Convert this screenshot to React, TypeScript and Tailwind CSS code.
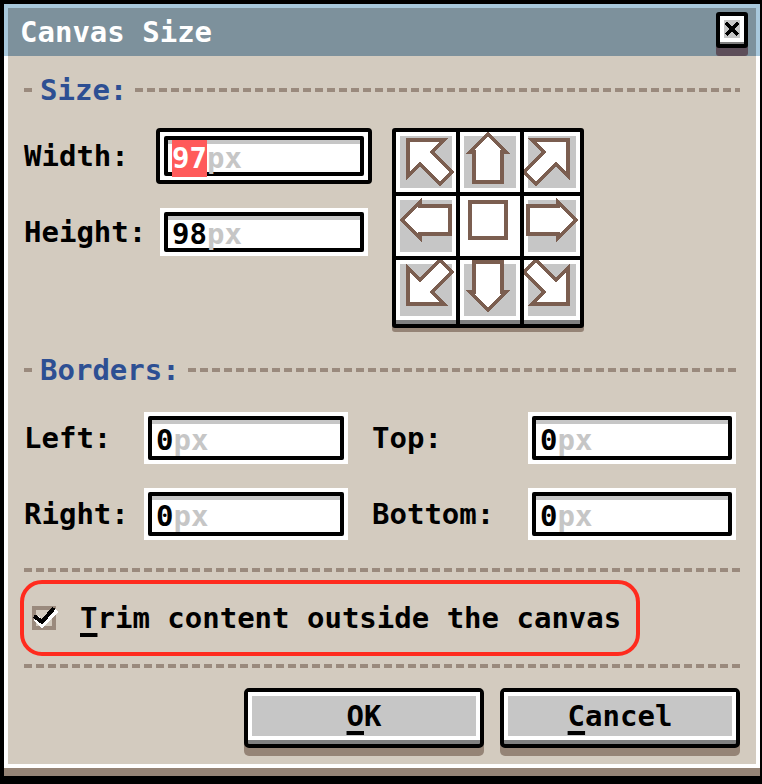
import React from 'react';

const FONT = "font-['DejaVu_Sans_Mono','Liberation_Mono',monospace]";
const DASHES = 'bg-[repeating-linear-gradient(90deg,#9a8a7d_0_8px,transparent_8px_12px)]';

type Pt = [number, number];

const NW: Pt[] = [[12, 8], [48, 8], [36, 20], [56, 40], [44, 52], [24, 32], [12, 44]];
const flipX = (p: Pt[], w: number): Pt[] => p.map(([x, y]) => [w - x, y]);
const flipY = (p: Pt[], h: number): Pt[] => p.map(([x, y]) => [x, h - y]);

// anchor glyphs, in the cell's own pixel space
const ANCHORS: { poly?: Pt[]; rect?: boolean }[] = [
    { poly: NW },
    { poly: [[28, 2], [46, 20], [42, 20], [42, 50], [14, 50], [14, 20], [10, 20]] },
    { poly: flipX(NW, 56) },
    { poly: [[6, 24], [24, 6], [24, 10], [54, 10], [54, 38], [24, 38], [24, 42]] },
    { rect: true },
    { poly: [[4, 10], [34, 10], [34, 6], [52, 24], [34, 42], [34, 38], [4, 38]] },
    { poly: flipY(NW, 52) },
    { poly: [[14, 2], [42, 2], [42, 32], [46, 32], [28, 50], [10, 32], [14, 32]] },
    { poly: flipY(flipX(NW, 56), 52) },
];

const AnchorGrid: React.FC = () => (
    <div className="shrink-0 grid grid-cols-[60px_60px_56px] grid-rows-[60px_60px_64px] gap-[4px] bg-black p-[4px] rounded-[3px] shadow-[0_4px_0_#958476]">
        {ANCHORS.map((a, i) => {
            const center = i === 4;
            const bottom = i >= 6;
            return (
                <div key={i} className="flex flex-col">
                    <div className={`relative flex-1 shadow-[inset_0_0_0_4px_#ffffff] ${center ? 'bg-white' : 'bg-[#c6c6c6]'}`}>
                        <svg className="absolute left-0 top-0" width="60" height="60" viewBox="0 0 60 60" shapeRendering="crispEdges">
                            {a.poly && (
                                <polygon
                                    points={a.poly.map(p => p.join(',')).join(' ')}
                                    fill="#ffffff"
                                    stroke="#7b5e50"
                                    strokeWidth="4"
                                    strokeLinejoin="miter"
                                />
                            )}
                            {a.rect && <rect x="10" y="6" width="36" height="36" fill="#ffffff" stroke="#7b5e50" strokeWidth="4" />}
                        </svg>
                    </div>
                    {bottom && <div className="h-[4px] bg-[#808080]" />}
                </div>
            );
        })}
    </div>
);

const SectionHeader: React.FC<{ label: string }> = ({ label }) => (
    <div className="flex items-center gap-[8px] h-[28px]">
        <div className="w-[8px] h-[4px] bg-[#9a8a7d]" />
        <span className="text-[#2d4f93] leading-none">{label}</span>
        <div className={`flex-1 h-[4px] ${DASHES}`} />
    </div>
);

interface FieldProps {
    value: string;
    width: number;
    height: number;
    focused?: boolean;
}

const Field: React.FC<FieldProps> = ({ value, width, height, focused }) => {
    const core = (
        <div className="flex-1 flex border-4 border-black bg-white rounded-[2px]">
            <div className="flex-1 flex items-center border-t-4 border-[#c6c6c6] pl-[4px] leading-none">
                {focused ? (
                    <span className="bg-[#ff5a5a] text-white py-[4px]">{value}</span>
                ) : (
                    <span className="text-black">{value}</span>
                )}
                <span className="text-[#c6c6c6]">px</span>
            </div>
        </div>
    );
    if (focused) {
        return (
            <div className="shrink-0 flex border-4 border-black bg-white p-[4px] rounded-[4px]" style={{ width, height }}>
                {core}
            </div>
        );
    }
    return (
        <div className="shrink-0 flex bg-white p-[4px]" style={{ width, height }}>
            {core}
        </div>
    );
};

const DialogButton: React.FC<{ children: React.ReactNode }> = ({ children }) => (
    <button className="w-[240px] h-[60px] flex flex-col border-4 border-black rounded-[5px] bg-[#808080] shadow-[0_8px_0_#958476]">
        <div className="flex-1 w-full flex items-center justify-center border-4 border-white bg-[#c6c6c6] text-black leading-none">
            {children}
        </div>
        <div className="h-[4px]" />
    </button>
);

const U: React.FC<{ children: React.ReactNode }> = ({ children }) => (
    <span className="underline decoration-[4px] underline-offset-[5px]">{children}</span>
);

export default function App() {
    return (
        <div className={`w-[762px] h-[784px] bg-black pt-[4px] pl-[4px] text-[29px] font-bold ${FONT}`}>
            <div className="w-[756px] flex flex-col">
                {/* title bar */}
                <div className="h-[52px] flex border-t-4 border-x-4 border-[#a8c8dc] bg-[#7d919c]">
                    <div className="flex-1 flex items-center pl-[12px] text-white leading-none">Canvas Size</div>
                    <div className="pt-[4px] pr-[8px]">
                        <div className="w-[32px] h-[36px] flex flex-col border-4 border-black rounded-[3px] bg-[#808080] shadow-[0_8px_0_#5d4e59]">
                            <div className="flex-1 flex items-center justify-center border-4 border-white bg-[#c6c6c6]">
                                <svg width="16" height="16" viewBox="0 0 16 16" shapeRendering="crispEdges">
                                    <path d="M2 2 L14 14 M14 2 L2 14" stroke="#000" strokeWidth="3" />
                                </svg>
                            </div>
                            <div className="h-[2px]" />
                        </div>
                    </div>
                </div>

                {/* body */}
                <div className="flex flex-col bg-[#d3cbbf] border-x-4 border-b-4 border-white pt-[20px] pb-[16px] pl-[16px] pr-[16px] text-black">
                    <SectionHeader label="Size:" />

                    <div className="mt-[24px] flex gap-[20px]">
                        <div className="w-[348px] shrink-0 flex flex-col gap-[24px]">
                            <div className="h-[56px] flex items-center">
                                <span className="w-[132px] shrink-0 leading-none">Width:</span>
                                <Field value="97" width={216} height={56} focused />
                            </div>
                            <div className="h-[48px] flex items-center">
                                <span className="w-[136px] shrink-0 leading-none">Height:</span>
                                <Field value="98" width={208} height={48} />
                            </div>
                        </div>
                        <AnchorGrid />
                    </div>

                    <div className="mt-[28px]">
                        <SectionHeader label="Borders:" />
                    </div>

                    <div className="mt-[28px] flex flex-col gap-[24px]">
                        {[
                            ['Left:', 'Top:'],
                            ['Right:', 'Bottom:'],
                        ].map(([a, b]) => (
                            <div key={a} className="h-[52px] flex items-center">
                                <span className="w-[120px] shrink-0 leading-none">{a}</span>
                                <Field value="0" width={204} height={52} />
                                <span className="w-[24px] shrink-0" />
                                <span className="w-[156px] shrink-0 leading-none">{b}</span>
                                <Field value="0" width={208} height={52} />
                            </div>
                        ))}
                    </div>

                    <div className={`mt-[28px] h-[4px] ${DASHES}`} />

                    <div className="mt-[8px] -ml-[4px] w-[620px] h-[76px] flex items-center gap-[20px] border-4 border-[#ff2b1e] rounded-[22px] pl-[8px]">
                        <svg width="28" height="24" viewBox="0 0 28 24" shapeRendering="crispEdges">
                            <rect x="2" y="2" width="20" height="20" fill="none" stroke="#9a8a7d" strokeWidth="4" />
                            <path d="M4 12 L10 18 L24 4" fill="none" stroke="#ffffff" strokeWidth="6" />
                            <path d="M2 10 L10 16 L22 2" fill="none" stroke="#000000" strokeWidth="4" />
                        </svg>
                        <span className="leading-none">
                            <U>T</U>rim content outside the canvas
                        </span>
                    </div>

                    <div className={`mt-[8px] h-[4px] ${DASHES}`} />

                    <div className="mt-[20px] flex justify-end gap-[16px]">
                        <DialogButton>
                            <U>O</U>K
                        </DialogButton>
                        <DialogButton>
                            <U>C</U>ancel
                        </DialogButton>
                    </div>
                </div>

                <div className="h-[8px] bg-[#958476]" />
            </div>
        </div>
    );
}
